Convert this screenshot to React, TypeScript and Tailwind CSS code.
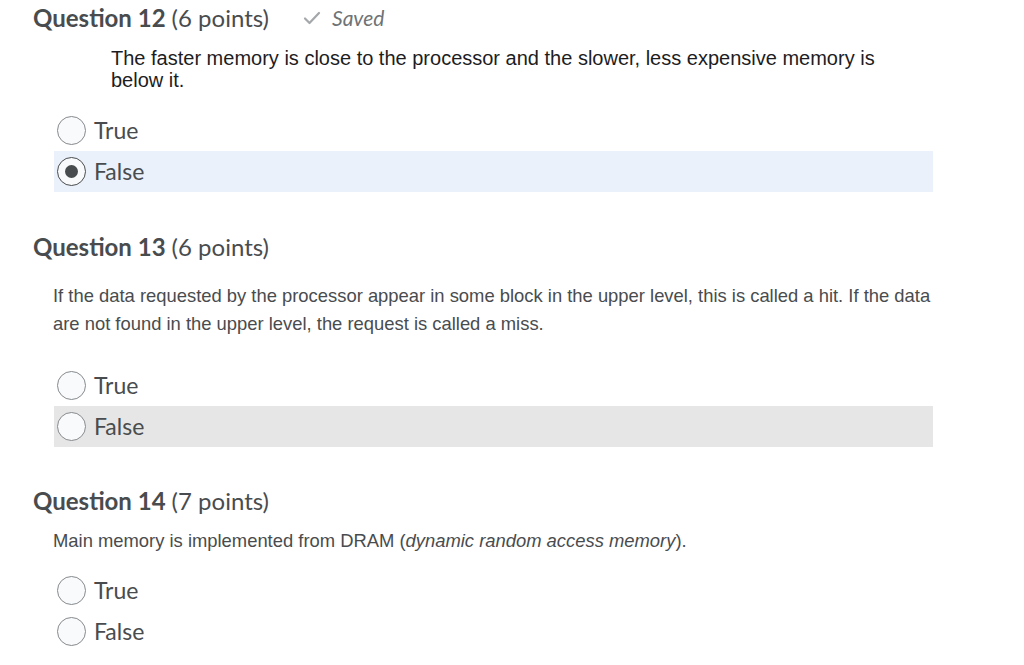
import React from 'react';

type Opt = { label: string; checked?: boolean; tone?: 'blue' | 'gray' };

const Radio = ({ label, checked, tone }: Opt) => {
    const bg = tone === 'blue' ? 'bg-[#eaf1fb]' : tone === 'gray' ? 'bg-[#e6e6e6]' : '';
    return (
        <div className={`flex items-center h-[41px] w-[879px] pl-[3px] ${bg}`}>
            <span
                className={`w-[29px] h-[29px] rounded-full border flex items-center justify-center bg-[#f9fafb] ${
                    checked ? 'border-[#494c4e]' : 'border-[#868a8d]'
                }`}
            >
                {checked && <span className="w-[13px] h-[13px] rounded-full bg-[#494c4e]" />}
            </span>
            <span className="ml-[8px] text-[23px] text-[#494c4e] font-['Lato',sans-serif]">{label}</span>
        </div>
    );
};

const Heading = ({ num, pts, saved }: { num: number; pts: number; saved?: boolean }) => (
    <div className="flex items-center h-[36px] font-['Lato',sans-serif] text-[#494c4e]">
        <span className="text-[24px] font-bold">Question {num}</span>
        <span className="text-[24px] ml-[6px]">({pts} points)</span>
        {saved && (
            <span className="flex items-center ml-[34px] text-[#6e7376]">
                <svg width="18" height="14" viewBox="0 0 18 14" fill="none">
                    <path d="M2 7.5 L6.5 12 L16 2" stroke="#a4a8ab" strokeWidth="2.2" strokeLinecap="round" strokeLinejoin="round" />
                </svg>
                <span className="ml-[11px] text-[21px] italic">Saved</span>
            </span>
        )}
    </div>
);

const App = () => {
    return (
        <div className="bg-white min-h-screen w-[1024px] pl-[33px] font-['Liberation_Sans',Arial,sans-serif]">
            {/* Question 12 */}
            <Heading num={12} pts={6} saved />
            <p className="mt-[11px] ml-[78px] text-[20px] leading-[22px] text-[#1d1d1f] w-[790px]">
                The faster memory is close to the processor and the slower, less expensive memory is below it.
            </p>
            <div className="mt-[19px] ml-[21px]">
                <Radio label="True" />
                <Radio label="False" checked tone="blue" />
            </div>

            {/* Question 13 */}
            <div className="mt-[37px]">
                <Heading num={13} pts={6} />
            </div>
            <p className="mt-[17px] ml-[20px] text-[18.4px] leading-[28px] text-[#494c4e] w-[890px]">
                If the data requested by the processor appear in some block in the upper level, this is called a hit. If the data are not found in the upper level, the request is called a miss.
            </p>
            <div className="mt-[27px] ml-[21px]">
                <Radio label="True" />
                <Radio label="False" tone="gray" />
            </div>

            {/* Question 14 */}
            <div className="mt-[36px]">
                <Heading num={14} pts={7} />
            </div>
            <p className="mt-[8px] ml-[20px] text-[18.4px] leading-[28px] text-[#494c4e]">
                Main memory is implemented from DRAM (<i>dynamic random access memory</i>).
            </p>
            <div className="mt-[15px] ml-[21px]">
                <Radio label="True" />
                <Radio label="False" />
            </div>
        </div>
    );
};

export default App;
